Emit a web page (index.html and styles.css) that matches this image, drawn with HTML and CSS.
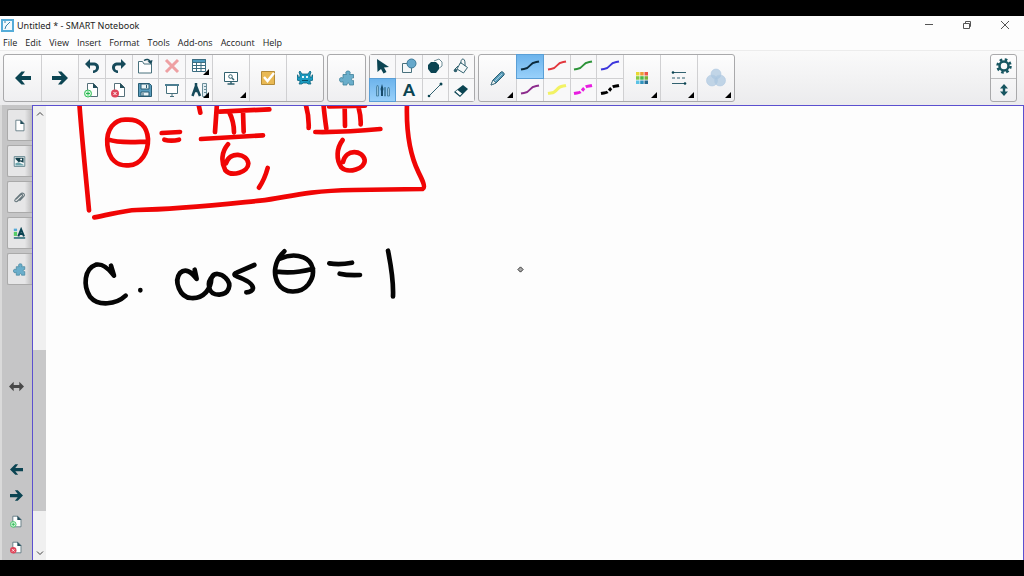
FILE: index.html
```html
<!DOCTYPE html>
<html lang="en">
  <head>
    <meta charset="UTF-8" />
    <meta name="viewport" content="width=device-width, initial-scale=1.0" />
    <title>Untitled * - SMART Notebook</title>
    <link rel="stylesheet" href="styles.css">
  </head>
  <body>
    <svg class="sprite" aria-hidden="true">
      <symbol id="arrow-left" viewBox="0 0 16 16"><path d="M0 8l6.500-6.500H10L6.500 6H16v4H6.500l3.500 4.500H6.500z" fill="#0b4452"/></symbol>
      <symbol id="arrow-right" viewBox="0 0 16 16"><path d="M16 8L9.500 1.500H6L9.500 6H0v4h9.500L6 14.500h3.500z" fill="#0b4452"/></symbol>
      <symbol id="undo" viewBox="0 0 16 16"><path d="M1 6l5-5v3.500h3c4 0 6 2 6 5S12 15 9 15v-2.500c2 0 3-1 3-2.800S11 7.500 9 7.500H6V11z" fill="#164a5a"/></symbol>
      <symbol id="redo" viewBox="0 0 16 16"><path d="M15 6l-5-5v3.500H7c-4 0-6 2-6 5S4 15 7 15v-2.500c-2 0-3-1-3-2.800S5 7.500 7 7.500h3V11z" fill="#164a5a"/></symbol>
      <symbol id="open" viewBox="0 0 16 16"><path d="M1.500 15V3.500h4L7 6h7.500v9z" fill="#fff" stroke="#48717d"/><path d="M7 2.500c3-2 5-1 6 1" fill="none" stroke="#164a5a" stroke-width="1.500"/><path d="M10.500 3.500l5-1.500-1 4.500z" fill="#164a5a"/></symbol>
      <symbol id="delete" viewBox="0 0 16 16"><path d="M2 2l12 12M14 2L2 14" stroke="#eea0a3" stroke-width="3"/></symbol>
      <symbol id="table" viewBox="0 0 16 16"><path d="M1 1h14v13H1z" fill="#fff"/><path d="M1 1h14v3H1z" fill="#4f9bbf"/><path d="M1.500 1.500h13v12h-13zM1 4.500h14M1 7.500h14M1 10.500h14M5.500 4v10M10 4v10" fill="none" stroke="#3b6c80"/></symbol>
      <symbol id="page" viewBox="0 0 16 16"><path d="M3.500 1.500h6l4 4v9h-10z" fill="#fff" stroke="#55707a"/><path d="M9 1l5 5H9z" fill="#234e5b"/></symbol>
      <symbol id="page-add" viewBox="0 0 16 16"><use href="#page"/><circle cx="4" cy="11.500" r="3.500" fill="#d5f5dc" stroke="#34c15a"/><path d="M2 11.500h4M4 9.500v4" stroke="#28b650"/></symbol>
      <symbol id="page-remove" viewBox="0 0 16 16"><use href="#page"/><circle cx="4" cy="11.500" r="4" fill="#e0465b"/><path d="M2.500 10l3 3M5.500 10l-3 3" stroke="#fff"/></symbol>
      <symbol id="save" viewBox="0 0 16 16"><path d="M1.500 1.500h11l2 2v11h-13z" fill="#5a9dbe" stroke="#2a5d72"/><path d="M4 2h8v5H4zM4 10h8v4H4z" fill="#e9f3f6" stroke="#2a5d72"/><path d="M9.500 3v3M6 11v3" stroke="#2a5d72"/></symbol>
      <symbol id="shade" viewBox="0 0 16 16"><path d="M1 2h14v2H1z" fill="#4c7e92"/><path d="M2.500 4v7.500h11V4" fill="#fff" stroke="#48717d"/><path d="M8 11.500V14M6 14.500h4" stroke="#48717d"/></symbol>
      <symbol id="measure" viewBox="0 0 16 16"><path d="M5 1v3L1.500 14M5 4l4 10M3 9h4" fill="none" stroke="#164a5a" stroke-width="2.500"/><path d="M11.500 1.500h4v13h-4z" fill="#e2edf2" stroke="#6a8c98"/><path d="M13 4.500h2M13 7.500h2M13 10.500h2" stroke="#6a8c98"/></symbol>
      <symbol id="display" viewBox="0 0 16 16"><path d="M1.500 2.500h13v9h-13z" fill="#fff" stroke="#31616f"/><circle cx="7.500" cy="6.500" r="1.800" fill="none" stroke="#31616f"/><path d="M9 8l2 2M8 12v2M4.500 14h7" stroke="#31616f" stroke-width="1.500"/></symbol>
      <symbol id="response" viewBox="0 0 16 16"><path d="M1.500 1.500h13v13h-13z" fill="#e9b954" stroke="#b38b39"/><path d="M4 7l3.500 4L14 3" fill="none" stroke="#fff" stroke-width="2.500"/></symbol>
      <symbol id="monster" viewBox="0 0 16 16"><path d="M3 1l2 3h6l2-3 1 1-1 3v2h2V5h1v5l-3 1v1l1 2h-3l-1-1H6l-1 1H2l1-2v-1l-3-1V5h1v2h2V5L2 2z" fill="#1b9ac0" stroke="#0c647f" stroke-width=".8"/><path d="M5 6h2v2H5zM9 6h2v2H9z" fill="#dff6fa"/><path d="M5 10.500h6" stroke="#074f66"/></symbol>
      <symbol id="puzzle" viewBox="0 0 16 16"><path d="M4 4.500h3.500C6 2.500 7 1 9 1s3 1.500 1.500 3.500h4V8c-2.500-1-2.500 3.500 0 2.500V15h-4c.5-2.500-3-2.500-2.500 0H4v-3.500c-2 1.500-3.500 0-3.500-1.800S2 6.800 4 8.200z" fill="#6aaecb" stroke="#3e8099" stroke-width=".8"/></symbol>
      <symbol id="pointer" viewBox="0 0 16 16"><path d="M2 1l12 8-5 .5 2.500 4.500-3 1.500L6 11l-3.500 3z" fill="#0b4452"/></symbol>
      <symbol id="shapes" viewBox="0 0 16 16"><path d="M1.500 5.500h9v9h-9z" fill="#f5f8f9" stroke="#48717d"/><circle cx="10.500" cy="5.500" r="4.500" fill="#66a8cb" stroke="#3b7997"/></symbol>
      <symbol id="polygon" viewBox="0 0 16 16"><path d="M7 3l5-2 3 3v4l-4 3" fill="#fff" stroke="#6c8c96"/><path d="M4 4h5l3 3v4l-3 4H4l-3-4V7z" fill="#0b4452"/></symbol>
      <symbol id="fill" viewBox="0 0 16 16"><path d="M7.500 4.500l7 5-4 5.500-6.500-4z" fill="#f5f8f9" stroke="#31616f"/><path d="M8 6c-1-6 4-7 4-1v3M5 8L2 11" fill="none" stroke="#31616f"/><circle cx="2.500" cy="12.500" r="1.800" fill="#31616f"/></symbol>
      <symbol id="pens" viewBox="0 0 16 16"><path d="M1.500 14V5l1-2 1 2v9zM12.500 14V7l1-2 1 2v7zM9.500 14V6l.5-1 .5 1v8z" fill="#90bfdc" stroke="#3d789a" stroke-width=".8"/><path d="M6 14V9L5.500 7 7 2l1.500 5L8 9v5z" fill="#164a6a"/></symbol>
      <symbol id="line" viewBox="0 0 16 16"><path d="M2 14L14 2" stroke="#31616f"/><circle cx="2" cy="14" r="1.300" fill="#0b4452"/><circle cx="14" cy="2" r="1.500" fill="#0b4452"/></symbol>
      <symbol id="eraser" viewBox="0 0 16 16"><path d="M1 10l9-7 5 4-8 8z" fill="#0b4452"/><path d="M2.500 9.500l2-1.500 4.500 3.500-2 2z" fill="#fff"/></symbol>
      <symbol id="pen" viewBox="0 0 16 16"><path d="M1 15l2-5L11 2c1-1 4 1 3 3l-8 8z" fill="#579bb9" stroke="#2b5e72"/><path d="M1 15l2-5 3 3z" fill="#f0f4f4" stroke="#2b5e72" stroke-width=".7"/><path d="M5 11l7-7" stroke="#a8d0df"/></symbol>
      <symbol id="stroke" viewBox="0 0 20 12"><path d="M1 9.500c5-1 6 0 9-4s5-3 9-4" fill="none" stroke="currentColor"/></symbol>
      <symbol id="lines" viewBox="0 0 16 16"><path d="M1 2.500h14M1 13.500h14" stroke="#31616f"/><path d="M1 8h14" stroke="#31616f" stroke-dasharray="3 2"/><circle cx="2" cy="2.500" r="1.300" fill="#0b4452"/><circle cx="14" cy="13.500" r="1.300" fill="#0b4452"/></symbol>
      <symbol id="colors" viewBox="0 0 16 16"><path d="M2 2h3.500v3.500H2z" fill="#e9d833"/><path d="M6.200 2h3.500v3.500H6.200z" fill="#ef9a36"/><path d="M10.500 2H14v3.500h-3.500z" fill="#ed5548"/><path d="M2 6.200h3.500v3.500H2z" fill="#86cc44"/><path d="M6.200 6.200h3.500v3.500H6.200z" fill="#48b94c"/><path d="M10.500 6.200H14v3.500h-3.500z" fill="#7aaf38"/><path d="M2 10.500h3.500V14H2z" fill="#5ac2e5"/><path d="M6.200 10.500h3.500V14H6.200z" fill="#2f92be"/><path d="M10.500 10.500H14V14h-3.500z" fill="#24668b"/></symbol>
      <symbol id="opacity" viewBox="0 0 20 20"><g fill="#a9c6e0" fill-opacity=".7" stroke="#b3cbe2" stroke-width=".6"><circle cx="10" cy="6" r="5"/><circle cx="6" cy="12.500" r="5.500"/><circle cx="14" cy="12.500" r="5.500"/></g></symbol>
      <symbol id="gear" viewBox="0 0 16 16"><circle cx="8" cy="8" r="4.500" fill="none" stroke="#165560" stroke-width="2.500"/><circle cx="8" cy="8" r="6.500" fill="none" stroke="#165560" stroke-width="2.500" stroke-dasharray="2.600 2.500"/></symbol>
      <symbol id="updown" viewBox="0 0 16 16"><path d="M8 2l4 4.500H9.200v3H12L8 14 4 9.500h2.800v-3H4z" fill="#165560"/></symbol>
      <symbol id="picture" viewBox="0 0 16 16"><path d="M1.500 2h13v12h-13z" fill="#f4f7f7" stroke="#49717b"/><path d="M3 3.500h10v6L9 8l-2 1-4-4z" fill="#123f4b"/><path d="M3 10l4-1 6 3v1H3z" fill="#6ea6ae"/><circle cx="10" cy="5.500" r="1.200" fill="#fff"/></symbol>
      <symbol id="clip" viewBox="0 0 16 16"><path d="M4 10l5-5c2-2 4 0 2 2l-5 5c-3 3-5 0-3-2l6-6c3-3 7 0 4 3l-5 5" fill="none" stroke="#66777d" stroke-width="1.400"/></symbol>
      <symbol id="properties" viewBox="0 0 16 16"><path d="M1 2h4v3H1z" fill="#54a8d6"/><path d="M1 6h4v5H1z" fill="#55cc66"/><path d="M1 12.500h14v2H1z" fill="#31707c"/><path d="M6.500 11.500L10 3l3.500 8.500M8 8.500h4" fill="none" stroke="#0b4452" stroke-width="2.500"/></symbol>
      <symbol id="resize" viewBox="0 0 16 16"><path d="M0 8l5-5v3.500h6V3l5 5-5 5V9.500H5V13z" fill="#484848"/></symbol>
    </svg>

    <main class="app">
      <header class="title-bar">
        <svg class="logo" viewBox="0 0 13 13" aria-hidden="true"><path d="M1 1h11v11H1z" fill="#f3fafd" stroke="#55acd8" stroke-width="2"/><path d="M4 10l1-3 4-4M3 3h2" stroke="#3b84a8" fill="none"/></svg>
        <h1>Untitled * - SMART Notebook</h1>
        <div class="window-buttons">
          <button aria-label="Minimize"><svg viewBox="0 0 10 10"><path d="M1 4.500h8"/></svg></button>
          <button aria-label="Restore"><svg viewBox="0 0 10 10"><path d="M1.500 3.500h6v5h-6zM3.500 3V1.500h5v5H8"/></svg></button>
          <button aria-label="Close"><svg viewBox="0 0 10 10"><path d="M1 1l8 8M9 1L1 9"/></svg></button>
        </div>
      </header>

      <nav class="menu">
        <button>File</button>
        <button>Edit</button>
        <button>View</button>
        <button>Insert</button>
        <button>Format</button>
        <button>Tools</button>
        <button>Add-ons</button>
        <button>Account</button>
        <button>Help</button>
      </nav>

      <div class="toolbar">
        <div class="group">
          <button class="tool" aria-label="Previous page"><svg><use href="#arrow-left"/></svg></button>
          <button class="tool" aria-label="Next page"><svg><use href="#arrow-right"/></svg></button>
          <div class="tool-grid is-wide">
            <button aria-label="Undo"><svg><use href="#undo"/></svg></button>
            <button aria-label="Redo"><svg><use href="#redo"/></svg></button>
            <button aria-label="Open"><svg><use href="#open"/></svg></button>
            <button aria-label="Delete"><svg><use href="#delete"/></svg></button>
            <button class="has-menu" aria-label="Table"><svg><use href="#table"/></svg></button>
            <button aria-label="Add page"><svg><use href="#page-add"/></svg></button>
            <button aria-label="Delete page"><svg><use href="#page-remove"/></svg></button>
            <button aria-label="Save"><svg><use href="#save"/></svg></button>
            <button aria-label="Screen shade"><svg><use href="#shade"/></svg></button>
            <button class="has-menu" aria-label="Measurement tools"><svg><use href="#measure"/></svg></button>
          </div>
          <button class="tool has-menu" aria-label="View screens"><svg><use href="#display"/></svg></button>
          <button class="tool" aria-label="Response"><svg><use href="#response"/></svg></button>
          <button class="tool" aria-label="Activity builder"><svg><use href="#monster"/></svg></button>
        </div>
        <div class="group">
          <button class="tool" aria-label="Add-ons"><svg><use href="#puzzle"/></svg></button>
        </div>
        <div class="group">
          <div class="tool-grid">
            <button aria-label="Select"><svg><use href="#pointer"/></svg></button>
            <button aria-label="Shapes"><svg><use href="#shapes"/></svg></button>
            <button aria-label="Regular polygons"><svg><use href="#polygon"/></svg></button>
            <button aria-label="Fill"><svg><use href="#fill"/></svg></button>
            <button class="is-active" aria-label="Pens"><svg><use href="#pens"/></svg></button>
            <button class="text-tool" aria-label="Text">A</button>
            <button aria-label="Lines"><svg><use href="#line"/></svg></button>
            <button aria-label="Eraser"><svg><use href="#eraser"/></svg></button>
          </div>
        </div>
        <div class="group">
          <button class="tool has-menu" aria-label="Pen type"><svg><use href="#pen"/></svg></button>
          <div class="tool-grid strokes">
            <button class="black is-active" aria-label="Black pen"><svg><use href="#stroke"/></svg></button>
            <button class="red" aria-label="Red pen"><svg><use href="#stroke"/></svg></button>
            <button class="green" aria-label="Green pen"><svg><use href="#stroke"/></svg></button>
            <button class="blue" aria-label="Blue pen"><svg><use href="#stroke"/></svg></button>
            <button class="purple" aria-label="Purple pen"><svg><use href="#stroke"/></svg></button>
            <button class="yellow" aria-label="Yellow highlighter"><svg><use href="#stroke"/></svg></button>
            <button class="magenta" aria-label="Magenta dashed pen"><svg><use href="#stroke"/></svg></button>
            <button class="dashed" aria-label="Black dashed pen"><svg><use href="#stroke"/></svg></button>
          </div>
          <button class="tool has-menu" aria-label="Color"><svg><use href="#colors"/></svg></button>
          <button class="tool has-menu" aria-label="Line style"><svg><use href="#lines"/></svg></button>
          <button class="tool opacity has-menu" aria-label="Transparency"><svg><use href="#opacity"/></svg></button>
        </div>
        <div class="group settings">
          <button aria-label="Customize toolbar"><svg><use href="#gear"/></svg></button>
          <button aria-label="Move toolbar"><svg><use href="#updown"/></svg></button>
        </div>
      </div>

      <div class="workspace">
        <aside class="sidebar">
          <button class="tab" aria-label="Page sorter"><svg><use href="#page"/></svg></button>
          <button class="tab" aria-label="Gallery"><svg><use href="#picture"/></svg></button>
          <button class="tab" aria-label="Attachments"><svg><use href="#clip"/></svg></button>
          <button class="tab" aria-label="Properties"><svg><use href="#properties"/></svg></button>
          <button class="tab" aria-label="Add-ons tab"><svg><use href="#puzzle"/></svg></button>
          <button class="resize" aria-label="Resize sidebar"><svg><use href="#resize"/></svg></button>
          <button class="page-button" aria-label="Back"><svg><use href="#arrow-left"/></svg></button>
          <button class="page-button" aria-label="Forward"><svg><use href="#arrow-right"/></svg></button>
          <button class="page-button" aria-label="New page"><svg><use href="#page-add"/></svg></button>
          <button class="page-button" aria-label="Remove page"><svg><use href="#page-remove"/></svg></button>
        </aside>
        <div class="scrollbar">
          <button aria-label="Scroll up"><svg viewBox="0 0 8 8"><path d="M1 5.500l3-3 3 3"/></svg></button>
          <div class="track"><div class="thumb"></div></div>
          <button aria-label="Scroll down"><svg viewBox="0 0 8 8"><path d="M1 2.500l3 3 3-3"/></svg></button>
        </div>
        <section class="page">
          <svg class="ink" viewBox="-72 18 1200 660" role="img" aria-label="Handwritten math notes">
            <g class="red-ink">
              <path d="M28 10C35 110 46 210 57 331M73 352C120 344 160 331 200 330C330 328 460 313 570 302C650 294 690 273 850 270L1058 267C1068 262 1056 238 1046 218C1020 165 1008 100 1011 10"/>
              <path d="M172 59C132 55 108 90 112 134C116 180 143 199 176 196C215 194 235 155 234 117C231 78 208 58 172 59M116 119C145 130 190 126 230 125"/>
              <path d="M275 99L330 96M283 119C300 124 315 122 327 119"/>
              <path d="M385 10L391 38M441 10L435 96M449 35L598 28M478 37C487 55 492 75 492 97M519 34L521 95M393 117L579 106"/>
              <path d="M474 133C455 155 452 185 466 211C485 232 536 216 535 190C530 160 480 152 468 190M593 204C586 230 577 248 567 263"/>
              <path d="M706 10C715 38 717 60 716 84M760 10C763 40 766 65 769 85M777 19L885 17M824 20L825 78M865 19C870 38 873 55 872 73M736 96C800 97 860 94 931 87"/>
              <path d="M818 120C799 145 798 178 814 202C835 222 886 206 884 180C878 150 828 145 819 186"/>
            </g>
            <g class="black-ink" transform="translate(0 390)">
              <path d="M123 107L132 137C110 108 95 101 78 104C42 117 39 168 60 200C85 230 138 224 167 197M211 180L211 181"/>
              <path d="M374 119L380 147C363 123 345 115 330 129C311 153 329 202 363 204C402 207 423 175 424 146C430 125 454 130 467 144C488 164 476 193 448 194C415 195 406 159 431 136"/>
              <path d="M553 105L500 128C490 132 493 137 500 139C525 148 548 161 549 174C549 181 540 187 529 187"/>
              <path d="M643 64C613 92 608 132 624 160C642 192 692 192 715 163C740 130 729 93 700 82C677 73 650 77 630 86M621 125C655 130 693 126 729 116"/>
              <path d="M778 100C800 104 826 102 846 98M809 131C830 136 850 136 870 135M954 62C962 102 971 153 969 199"/>
            </g>
          </svg>
          <svg class="pen-cursor" viewBox="0 0 8 8" aria-hidden="true"><path d="M4 1l3 3-3 3-3-3z"/></svg>
        </section>
      </div>
    </main>
  </body>
</html>
```

FILE: styles.css
```css
* {
  box-sizing: border-box;
  margin: 0;
  padding: 0;
}
body {
  background: #000;
  height: 100vh;
  padding: 16px 0;
  font-family: "Open Sans", "Noto Sans", sans-serif;
  color: #222;
}
button {
  background: none;
  border: none;
  font: inherit;
  color: inherit;
  display: flex;
  align-items: center;
  justify-content: center;
}
.sprite {
  display: none;
}
.app {
  height: 100%;
  display: flex;
  flex-direction: column;
  background: #fdfdfd;
}

.title-bar {
  display: flex;
  align-items: center;
  height: 18px;
  padding-left: 1px;
  gap: 3px;
}
.logo {
  width: 13px;
  height: 13px;
}
.title-bar h1 {
  font: 400 9px "Noto Sans", sans-serif;
}
.window-buttons {
  display: flex;
  margin-left: auto;
}
.window-buttons button {
  width: 38px;
}
.window-buttons svg {
  width: 10px;
  height: 10px;
  fill: none;
  stroke: #555;
}

.menu {
  display: flex;
  gap: 8px;
  height: 16px;
  padding-left: 3px;
  font-size: 9px;
}

.toolbar {
  display: flex;
  gap: 3px;
  padding: 3px 7px 3px 3px;
  border-top: 1px solid #ececec;
  background: linear-gradient(#fafafa, #ebebed);
}
.group {
  display: flex;
  height: 48px;
  border: 1px solid #a9a9ab;
  border-radius: 3px;
  background: linear-gradient(#fdfdfd, #efeff1);
}
.group svg {
  width: 16px;
  height: 16px;
}
.tool {
  width: 37px;
}
.tool + .tool,
.tool + .tool-grid,
.tool-grid + .tool {
  border-left: 1px solid #d0d0d2;
}
.tool-grid {
  display: grid;
  grid-template-columns: repeat(4, 1fr);
  grid-template-rows: 1fr 1fr;
  width: 104px;
  gap: 1px;
  background: #d0d0d2;
}
.tool-grid.is-wide {
  grid-template-columns: repeat(5, 1fr);
  width: 134px;
}
.tool-grid button {
  background: #f8f8f9;
}
.tool-grid .is-active {
  background: linear-gradient(#6db4ec, #98d0fa);
  outline: 1px solid #5a9fd6;
}
.has-menu {
  position: relative;
}
.has-menu::after {
  content: "";
  position: absolute;
  right: 3px;
  bottom: 3px;
  border: 3px solid #000;
  border-top-color: transparent;
  border-left-color: transparent;
}
.text-tool {
  font: 900 17px "Lato", sans-serif;
  color: #0b4452;
}
.tool-grid.strokes {
  width: 107px;
}
.group .strokes svg {
  width: 20px;
  height: 12px;
  stroke-width: 2;
}
.group .opacity svg {
  width: 20px;
  height: 20px;
}
.black { color: #0c2a3c; }
.red { color: #e2373d; }
.green { color: #2c9338; }
.blue { color: #3c35dc; }
.purple { color: #8c2b8c; }
.yellow { color: #f2f264; }
.magenta { color: #e81de0; }
.dashed { color: #000; }
.group .yellow svg,
.group .magenta svg,
.group .dashed svg {
  stroke-width: 3;
}
.magenta svg,
.dashed svg {
  stroke-dasharray: 7 2 3 2;
}
.settings {
  flex-direction: column;
  width: 27px;
  margin-left: auto;
}
.settings button {
  flex: 1;
}
.settings button + button {
  border-top: 1px solid #bdbdbf;
}

.workspace {
  flex: 1;
  display: flex;
  min-height: 0;
}
.sidebar {
  display: flex;
  flex-direction: column;
  width: 32px;
  padding-top: 4px;
  background: linear-gradient(90deg, #dadada 2px, #c5c5c6 2px);
}
.sidebar svg {
  width: 13px;
  height: 13px;
}
.tab {
  height: 32px;
  margin: 0 0 4px 7px;
  padding-right: 2px;
  border: 1px solid #aaa;
  border-right: none;
  border-radius: 2px 0 0 2px;
  background: linear-gradient(90deg, #e6e6e7 70%, #bdbdbe);
}
.resize {
  flex: 1;
  padding-top: 28px;
}
.sidebar .resize svg {
  width: 15px;
  height: 15px;
}
.page-button {
  height: 26px;
}
.scrollbar {
  display: flex;
  flex-direction: column;
  width: 14px;
  border-top: 1px solid #5b50cf;
  border-left: 1px solid #5b50cf;
  background: #f0f0f0;
}
.scrollbar button {
  height: 15px;
}
.scrollbar svg {
  width: 8px;
  height: 8px;
  fill: none;
  stroke: #444;
}
.track {
  flex: 1;
  display: flex;
  flex-direction: column;
}
.track::before {
  content: "";
  flex: 54;
}
.track::after {
  content: "";
  flex: 8;
}
.thumb {
  flex: 38;
  background: #c8c8c9;
}
.page {
  position: relative;
  flex: 1;
  border-top: 1px solid #5b50cf;
  border-right: 1px solid #5b50cf;
  background: #fdfdfd;
}
.ink {
  display: block;
  width: 400px;
  height: 220px;
  fill: none;
  stroke-linecap: round;
  stroke-linejoin: round;
}
.red-ink {
  stroke: #f00505;
  stroke-width: 14;
}
.black-ink {
  stroke: #050505;
  stroke-width: 14;
}
/* pen position on the page */
.pen-cursor {
  position: absolute;
  left: 471px;
  top: 160px;
  width: 7px;
  height: 7px;
  fill: #aaa;
  stroke: #222;
}
```
